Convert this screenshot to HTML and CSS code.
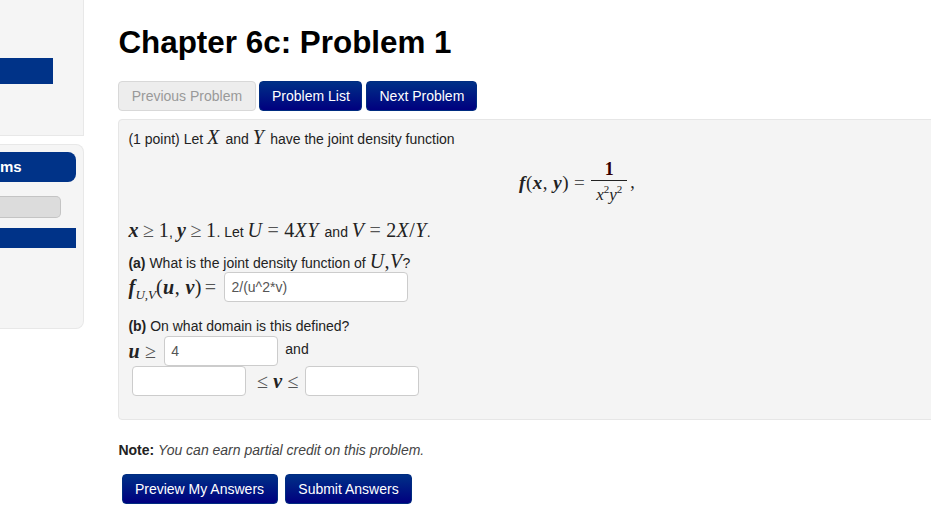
FILE: index.html
```html
<!DOCTYPE html>
<html lang="en">
<head>
<meta charset="utf-8">
<title>Chapter 6c: Problem 1</title>
<link rel="stylesheet" href="styles.css">
</head>
<body>
<div class="page">
  <aside class="sidebar">
    <div class="well well-top"><div class="bar-top"></div></div>
    <div class="well well-nav">
      <div class="pill">ms</div>
      <div class="grey-item"></div>
      <div class="bar-nav"></div>
    </div>
  </aside>
  <main class="main">
    <h1 class="title">Chapter 6c: Problem 1</h1>
    <nav class="problem-nav">
      <a class="btn btn-disabled">Previous Problem</a>
      <a class="btn btn-list">Problem List</a>
      <a class="btn btn-next">Next Problem</a>
    </nav>
    <section class="problem">
      <p class="intro">(1 point) Let <span class="m big"><i>X</i></span> and <span class="m big"><i>Y</i></span> have the joint density function</p>
      <div class="display">
        <span class="m eq"><i class="lc">f</i>(<i class="lc">x</i>, <i class="lc">y</i>)<span class="rel">=</span></span>
        <span class="frac"><span class="num">1</span><span class="den"><i class="lc">x</i><sup>2</sup><i class="lc">y</i><sup>2</sup></span></span><span class="m comma">,</span>
      </div>
      <p class="line-range"><span class="m big tight"><i class="lc">x</i><span class="rel">≥</span>1</span>, <span class="m big tight"><i class="lc">y</i><span class="rel">≥</span>1</span>. Let <span class="m big u-eq"><i>U</i><span class="rel">=</span>4<i>XY</i></span> and <span class="m big"><i>V</i><span class="rel">=</span>2<i>X</i>/<i>Y</i></span>.</p>
      <p class="line-a"><b>(a)</b> What is the joint density function of <span class="m big"><i>U</i>,<i>V</i></span>?</p>
      <div class="answer-row">
        <span class="m big fuv"><i class="lc">f</i><sub>U,V</sub>(<i class="lc">u</i>, <i class="lc">v</i>)<span class="rel">=</span></span>
        <input class="field field-wide" type="text" value="2/(u^2*v)">
      </div>
      <p class="line-b"><b>(b)</b> On what domain is this defined?</p>
      <div class="answer-row">
        <span class="m big ugeq"><i class="lc">u</i><span class="rel">≥</span></span>
        <input class="field field-short" type="text" value="4">
        <span class="and">and</span>
      </div>
      <div class="answer-row row-v">
        <input class="field field-short" type="text">
        <span class="m big between"><span class="rel">≤</span><i class="lc">v</i><span class="rel">≤</span></span>
        <input class="field field-short" type="text">
      </div>
    </section>
    <p class="note"><b>Note:</b> <em>You can earn partial credit on this problem.</em></p>
    <div class="actions">
      <button class="btn btn-preview" type="button">Preview My Answers</button>
      <button class="btn btn-submit" type="button">Submit Answers</button>
    </div>
  </main>
</div>
</body>
</html>
```
FILE: styles.css
```css
html, body { margin: 0; padding: 0; background: #fff; }
body { width: 931px; height: 523px; overflow: hidden; font-family: "Liberation Sans", Arial, sans-serif; font-size: 14px; line-height: 20px; color: #222; }
.page { display: flex; align-items: flex-start; }
.sidebar { width: 84px; flex: none; display: flex; flex-direction: column; gap: 8px; }
.well { background: #f5f5f5; border: 1px solid #e8e8e8; border-left: 0; box-sizing: border-box; }
.well-top { height: 136px; border-top: 0; padding-top: 58px; }
.bar-top { width: 53px; height: 26px; background: #038; }
.well-nav { height: 185px; border-radius: 0 8px 8px 0; padding-top: 7px; }
.pill { width: 76px; height: 30px; background: #038; border-radius: 0 8px 8px 0; color: #fff; font-weight: bold; font-size: 15px; line-height: 29px; white-space: nowrap; }
.grey-item { width: 61px; height: 22px; margin-top: 14px; background: #dcdcdc; border: 1px solid #c4c4c4; border-left: 0; border-radius: 0 5px 5px 0; box-sizing: border-box; }
.bar-nav { width: 76px; height: 20px; margin-top: 10px; background: #038; }
.main { margin-left: 34.4px; width: 920px; flex: none; }
.title { margin: 0; padding-top: 23px; height: 58px; font-size: 31.4px; line-height: 40px; font-weight: bold; color: #000; box-sizing: content-box; }
.problem-nav { display: flex; gap: 4px; height: 30px; margin-bottom: 8px; }
.btn { display: block; box-sizing: border-box; height: 30px; padding: 0; border: 1px solid #002c80; border-radius: 4px; font: 14px/28px "Liberation Sans", Arial, sans-serif; color: #fff; text-align: center; background: linear-gradient(#003087, #00007f); }
.btn-disabled { width: 138px; margin-right: -1px; padding-right: 1px; background: #ededed; border-color: #d8d8d8; color: #999; }
.btn-list { width: 103px; }
.btn-next { width: 111px; }
.problem { box-sizing: border-box; height: 301px; padding: 7px 10px 0 9px; background: #f4f4f4; border: 1px solid #e6e6e6; border-radius: 4px; }
.problem p { margin: 0; }
.m { font-family: "Liberation Serif", "Times New Roman", serif; color: #222; }
.m i { font-style: italic; font-weight: normal; }
.m i.lc { font-weight: bold; }
.big { font-size: 20px; letter-spacing: 0.4px; }
.intro .big i { margin-right: 2px; }
.rel { color: #555; margin: 0 5px; font-style: normal; }
.tight .rel { margin: 0 4.25px; }
.u-eq { margin-right: 2px; }
.display { height: 47px; margin-top: 9px; display: flex; justify-content: center; align-items: center; padding-right: 2px; }
.eq { font-size: 19px; letter-spacing: 0.5px; white-space: pre; margin-top: 2px; }
.frac { display: inline-flex; flex-direction: column; align-items: center; font-family: "Liberation Serif", serif; font-size: 18px; line-height: 22px; margin-left: 1px; }
.num { display: block; width: 36px; text-align: center; border-bottom: 1px solid #222; font-weight: bold; color: #300; }
.den { line-height: 20px; padding-top: 4px; font-size: 17px; white-space: nowrap; }
.den sup { font-size: 11px; line-height: 0; }
.comma { font-size: 18px; margin-left: 3px; }
.line-range { margin-top: 15px !important; height: 21px; line-height: 21px; white-space: nowrap; }
.line-a { margin-top: 10px !important; height: 21px; line-height: 21px; }
.answer-row { display: flex; align-items: center; height: 30px; }
.fuv { white-space: pre; }
.fuv .rel { margin: 0 5px 0 3px; }
.fuv sub { font-size: 13px; font-weight: normal; font-style: italic; line-height: 0; letter-spacing: 0; }
.field { box-sizing: border-box; height: 30px; padding: 4px 6px; border: 1px solid #ccc; border-radius: 4px; background: #fff; font: 14px/20px "Liberation Sans", Arial, sans-serif; color: #555; outline: 0; }
.field-wide { width: 184px; margin-left: 3px; }
.field-short { width: 114px; }
.line-b { margin-top: 14px !important; height: 20px; }
.and { margin: -4px 0 0 7px; }
.ugeq { margin-right: 3px; }
.row-v { padding-left: 3.5px; }
.between { margin: 0 1px 0 6px; white-space: pre; }
.note { margin: 20px 0 0; height: 20px; color: #222; }
.note em { font-style: italic; color: #444; }
.actions { display: flex; gap: 7px; margin: 14px 0 0 3.6px; }
.btn-preview { width: 156px; padding-right: 1px; }
.btn-submit { width: 127px; }
```
